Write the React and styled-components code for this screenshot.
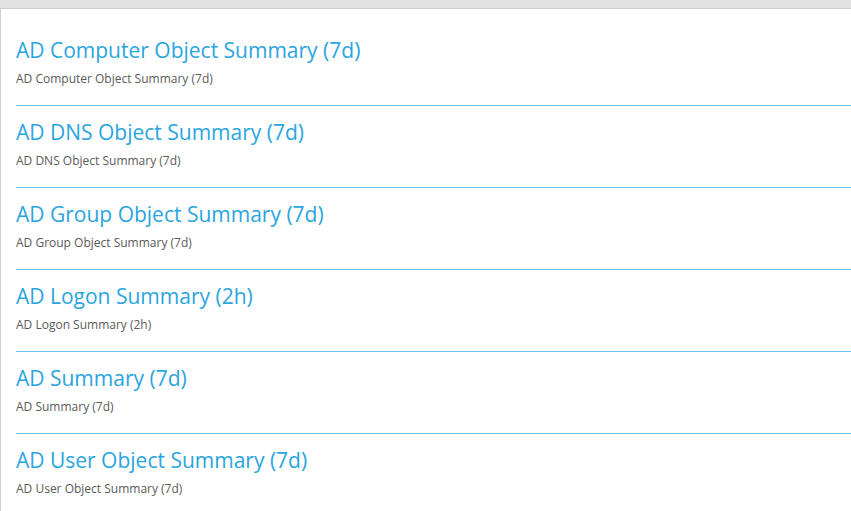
import React from "react";
import styled, { createGlobalStyle } from "styled-components";

const Global = createGlobalStyle`
  html, body { margin: 0; padding: 0; background: #ffffff; }
  body { font-family: "Open Sans", "Liberation Sans", sans-serif; overflow: hidden; }
`;

const Page = styled.div`
  width: 851px;
  height: 511px;
  display: flex;
  flex-direction: column;
  background: #e2e2e2;
`;

const TopBar = styled.div`
  height: 8px;
  flex: none;
  background: #e2e2e2;
  border-bottom: 1px solid #cfcfcf;
`;

const Panel = styled.div`
  flex: 1;
  background: #ffffff;
  border-left: 1px solid #cfcfcf;
  padding: 15px 0 0 15px;
  overflow: hidden;
`;

const List = styled.ul`
  list-style: none;
  margin: 0;
  padding: 0;
`;

const Item = styled.li`
  display: flex;
  flex-direction: column;
  align-items: flex-start;
  gap: 7px;
  padding: 13px 0 17px;
  border-bottom: 1px solid #6cc4ea;
  &:last-child { border-bottom: none; }
`;

const Title = styled.a`
  font-size: 21px;
  line-height: 26px;
  color: #2aa5de;
  text-decoration: none;
  cursor: pointer;
`;

const Sub = styled.div`
  font-size: 12px;
  line-height: 18px;
  color: #5a5a5a;
`;

const items = [
  "AD Computer Object Summary (7d)",
  "AD DNS Object Summary (7d)",
  "AD Group Object Summary (7d)",
  "AD Logon Summary (2h)",
  "AD Summary (7d)",
  "AD User Object Summary (7d)",
];

export default function App() {
  return (
    <>
      <Global />
      <Page>
        <TopBar />
        <Panel>
          <List>
            {items.map((t) => (
              <Item key={t}>
                <Title>{t}</Title>
                <Sub>{t}</Sub>
              </Item>
            ))}
          </List>
        </Panel>
      </Page>
    </>
  );
}
